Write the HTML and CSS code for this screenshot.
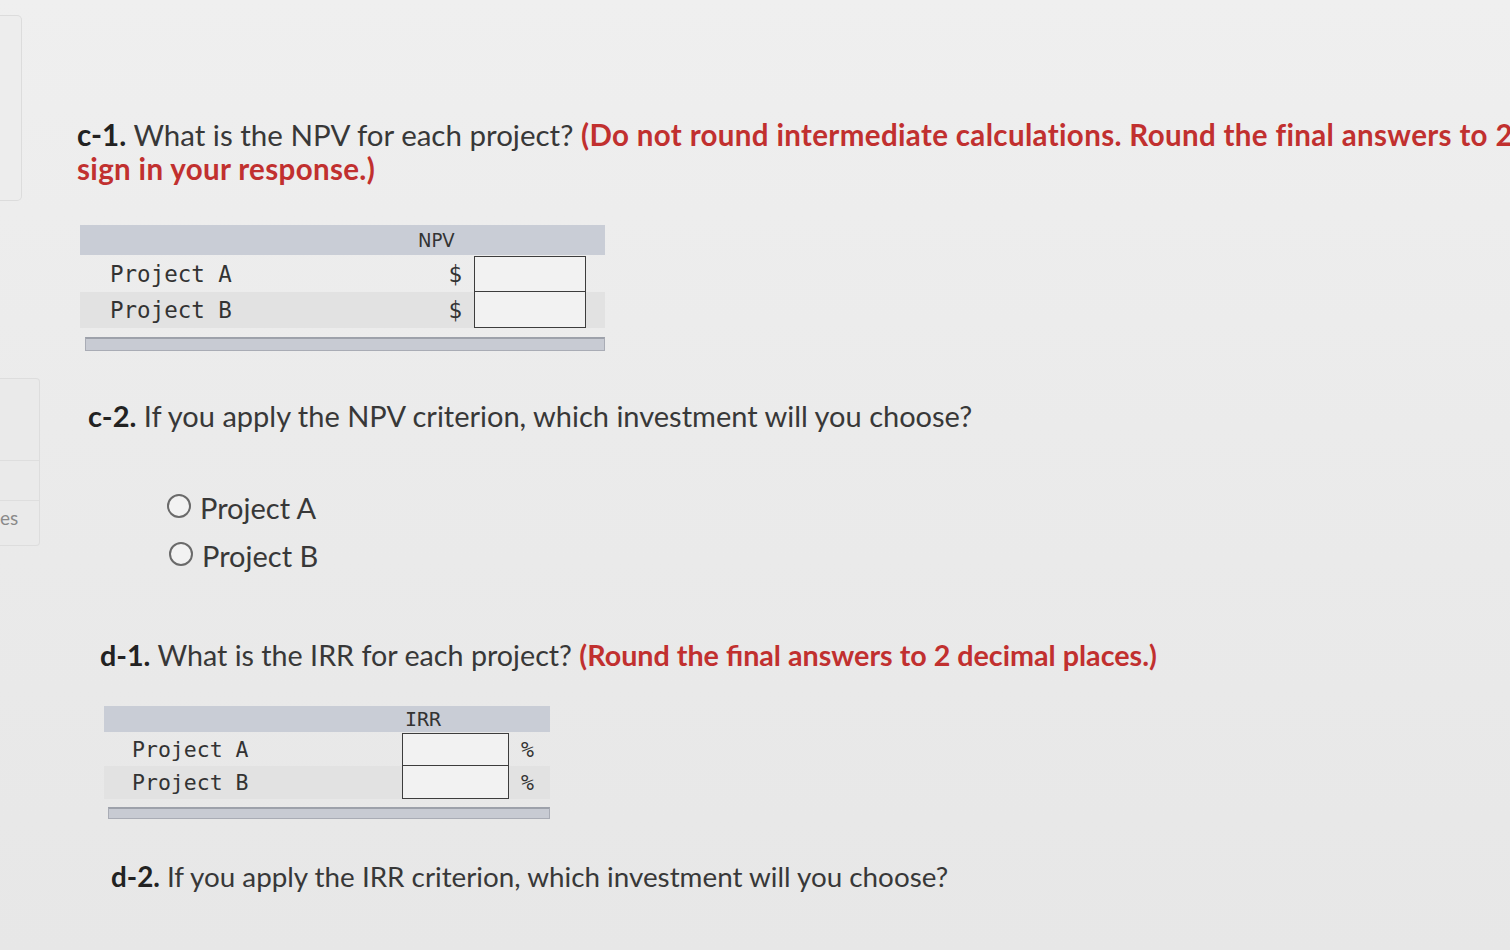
FILE: index.html
```html
<!DOCTYPE html>
<html lang="en">
<head>
<meta charset="utf-8">
<title>NPV and IRR</title>
<link rel="stylesheet" href="styles.css">
</head>
<body>
<div class="page">
  <aside class="sidebar">
    <div class="side-box"></div>
    <div class="side-group">
      <div class="side-cell side-cell-tall"></div>
      <div class="side-cell side-cell-mid"></div>
      <div class="side-cell side-cell-last">es</div>
    </div>
  </aside>

  <main class="main">
    <p class="question q-c1"><b class="qnum">c-1.</b> What is the NPV for each project? <b class="note">(Do not round intermediate calculations. Round the final answers to 2 decimal places. Omit $<br>sign in your response.)</b></p>

    <div class="grid-table npv-table">
      <div class="thead npv-head">NPV</div>
      <div class="trow npv-row">
        <span class="label">Project A</span>
        <span class="unit">$</span>
        <span class="input"></span>
        <span></span>
      </div>
      <div class="trow npv-row alt">
        <span class="label">Project B</span>
        <span class="unit">$</span>
        <span class="input input-next"></span>
        <span></span>
      </div>
      <div class="tfoot npv-foot"></div>
    </div>

    <p class="question q-c2"><b class="qnum">c-2.</b> If you apply the NPV criterion, which investment will you choose?</p>

    <div class="radios">
      <label class="radio"><span class="circle"></span>Project A</label>
      <label class="radio radio-b"><span class="circle"></span>Project B</label>
    </div>

    <p class="question q-d1"><b class="qnum">d-1.</b> What is the IRR for each project? <b class="note">(Round the final answers to 2 decimal places.)</b></p>

    <div class="grid-table irr-table">
      <div class="thead irr-head">IRR</div>
      <div class="trow irr-row">
        <span class="label">Project A</span>
        <span class="input"></span>
        <span class="unit-pct">%</span>
      </div>
      <div class="trow irr-row alt">
        <span class="label">Project B</span>
        <span class="input input-next"></span>
        <span class="unit-pct">%</span>
      </div>
      <div class="tfoot irr-foot"></div>
    </div>

    <p class="question q-d2"><b class="qnum">d-2.</b> If you apply the IRR criterion, which investment will you choose?</p>
  </main>
</div>
</body>
</html>
```

FILE: styles.css
```css
* { box-sizing: border-box; }

html, body {
  margin: 0;
  padding: 0;
  width: 1510px;
  height: 950px;
  overflow: hidden;
}

body {
  background: linear-gradient(180deg, #efefef 0%, #ebebeb 45%, #e7e7e7 100%);
  color: #383838;
  font-family: Lato, "Open Sans", sans-serif;
}

.page {
  display: flex;
  height: 950px;
}

/* left sidebar remnants */
.sidebar {
  width: 40px;
  flex: none;
  display: flex;
  flex-direction: column;
  padding-top: 15px;
}

.side-box {
  width: 22px;
  height: 186px;
  border: 1px solid #dcdcdc;
  border-left: none;
  border-radius: 0 5px 5px 0;
  background: #ededed;
}

.side-group {
  margin-top: 177px;
  width: 40px;
  border: 1px solid #dddddd;
  border-left: none;
  border-radius: 0 4px 4px 0;
  background: #eaeaea;
}

.side-cell {
  border-bottom: 1px solid #dedede;
}
.side-cell-tall { height: 82px; }
.side-cell-mid { height: 40px; }
.side-cell-last {
  border-bottom: none;
  height: 44px;
  font-size: 19px;
  color: #8a8a8a;
  line-height: 22px;
  padding-top: 6px;
}

.main {
  flex: 1;
  min-width: 0;
  padding-left: 37px;
  padding-top: 118px;
}

.question {
  margin: 0;
  font-size: 29px;
  line-height: 34px;
  white-space: nowrap;
  color: #383838;
}

.q-c1 { font-size: 29.5px; }
.q-c1 .note { letter-spacing: 0.35px; }

.qnum { font-weight: 700; color: #222; }
.note { font-weight: 700; color: #c1302f; }

/* tables */
.grid-table {
  margin-top: 39px;
  font-family: "DejaVu Sans Mono", "Liberation Mono", monospace;
  color: #333;
}

.thead {
  background: #c9cdd6;
  font-size: 20px;
  line-height: 30px;
  height: 30px;
}

.npv-table {
  width: 525px;
  margin-left: 3px;
}

.npv-head {
  padding-left: 338px;
  font-family: "DejaVu Sans Condensed", "DejaVu Sans", sans-serif;
}

.trow {
  display: grid;
  align-items: center;
  font-size: 22.5px;
}

.npv-row {
  grid-template-columns: 360px 34px 112px 19px;
  height: 36px;
  margin-top: 1px;
}
.npv-row.alt { margin-top: 0; }

.alt { background: #e2e2e2; }

.label { padding-left: 30px; }

.unit {
  text-align: right;
  padding-right: 12px;
}

.input {
  height: 36px;
  border: 1px solid #3d3d3d;
  background: #f2f2f2;
}
.input-next { margin-top: -1px; height: 37px; }

.tfoot {
  height: 14px;
  margin-left: 5px;
  background: #c8cbd3;
  border: 1px solid #a9acb5;
  border-top: 2px solid #9da1aa;
}

.npv-foot { margin-top: 9px; }

.q-c2 {
  margin-top: 47px;
  margin-left: 11px;
  line-height: 35px;
}

.radios {
  margin-top: 57px;
  margin-left: 90px;
  display: flex;
  flex-direction: column;
  gap: 13px;
}

.radio {
  display: flex;
  align-items: center;
  gap: 9px;
  font-size: 29px;
  line-height: 35px;
  color: #383838;
}
.radio-b { margin-left: 2px; }

.circle {
  width: 24px;
  height: 24px;
  border: 2px solid #6a6a6a;
  border-radius: 50%;
  background: #f2f2f2;
  margin-top: -4px;
}

.q-d1 {
  margin-top: 65px;
  margin-left: 23px;
  font-size: 28.7px;
  line-height: 35px;
}

.irr-table {
  width: 446px;
  margin-left: 27px;
  margin-top: 33px;
}

.irr-head {
  height: 26px;
  line-height: 26px;
  padding-left: 301px;
}

.irr-row {
  grid-template-columns: 298px 107px 41px;
  height: 33px;
  margin-top: 1px;
  font-size: 21.5px;
}
.irr-row.alt { margin-top: 0; }
.irr-row .label { padding-left: 28px; }
.irr-row .input { height: 33px; }
.irr-row .input-next { height: 34px; }

.unit-pct {
  padding-left: 12px;
}

.irr-foot {
  margin-top: 8px;
  height: 12px;
  margin-left: 4px;
}

.q-d2 {
  margin-top: 40px;
  margin-left: 34px;
  font-size: 27.8px;
  line-height: 35px;
}
```
